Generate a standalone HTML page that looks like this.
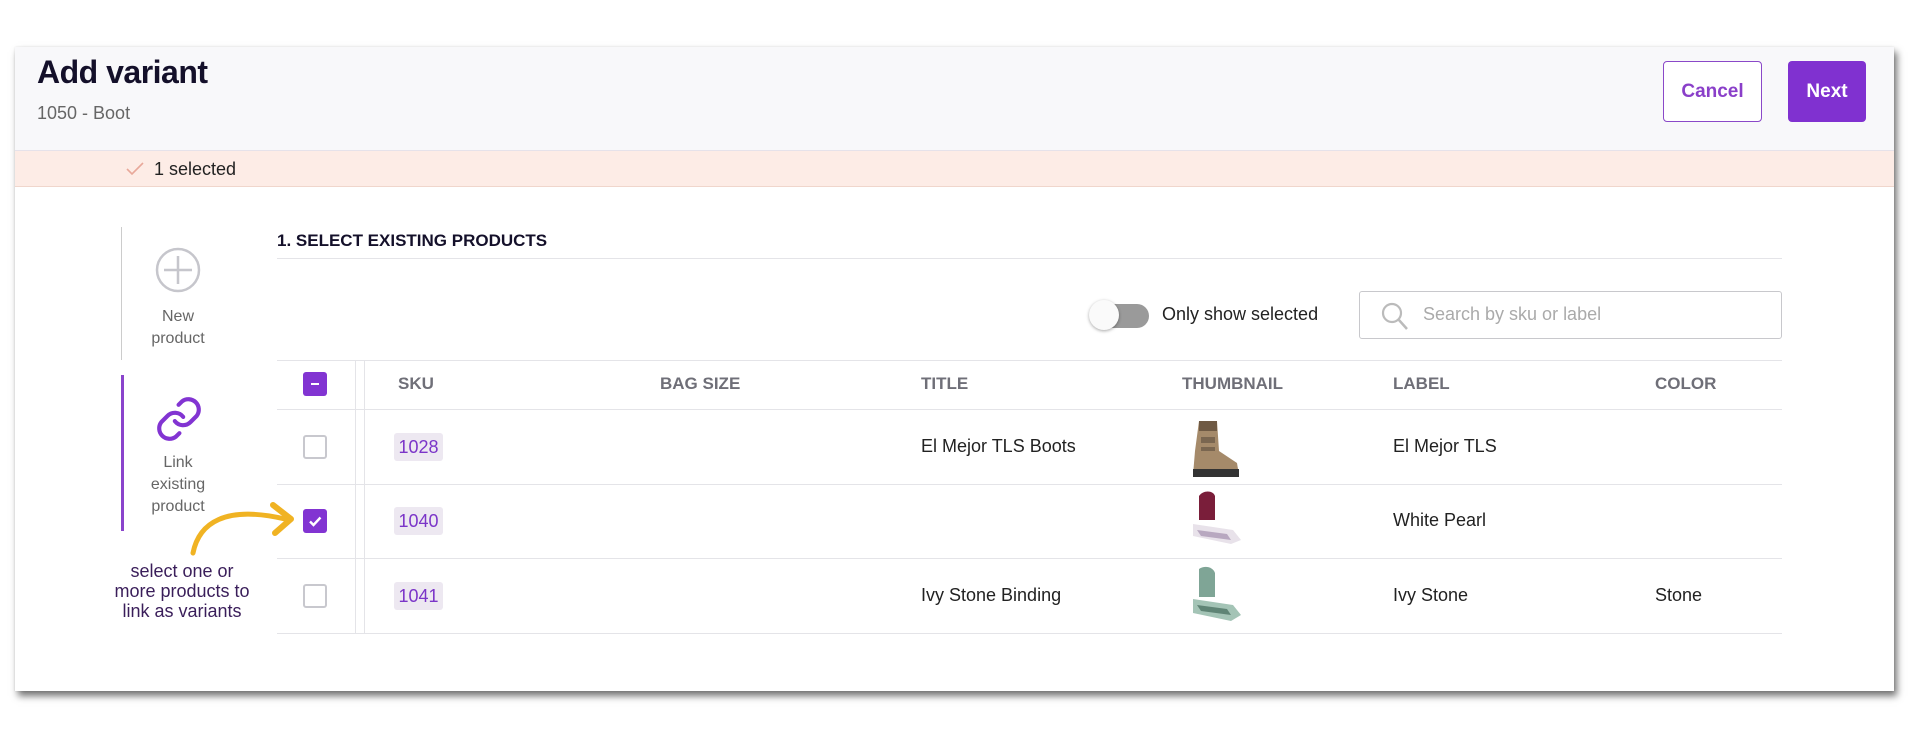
<!DOCTYPE html>
<html><head><meta charset="utf-8"><style>
*{box-sizing:border-box;margin:0;padding:0}
body{width:1920px;height:747px;background:#fff;font-family:"Liberation Sans",sans-serif;position:relative;overflow:hidden;color:#222}
.card{position:absolute;left:15px;top:47px;width:1879px;height:644px;background:#fff;box-shadow:3px 5px 7px rgba(0,0,0,.55),0 0 2px rgba(0,0,0,.1)}
.hdr{position:absolute;left:0;top:0;width:100%;height:104px;background:#f8f8fa;border-bottom:1px solid #e6e2ea}
.ban{position:absolute;left:0;top:104px;width:100%;height:36px;background:#fdece6;border-bottom:1px solid #f0d6cc}
.a{position:absolute;white-space:nowrap}
.btn{position:absolute;top:14px;height:61px;border-radius:4px;font-size:19px;font-weight:bold;display:flex;align-items:center;justify-content:center}
.hl{position:absolute;height:1px;background:#e4e4e8}
.vl{position:absolute;width:1px;background:#e4e4e8}
.th{position:absolute;top:327px;font-size:17px;font-weight:bold;color:#6f6f78}
.cb{position:absolute;left:288px;width:24px;height:24px;border:2px solid #c8c8ce;border-radius:3px;background:#fff}
.cbp{border:none;background:#8234d2}
.chip{position:absolute;left:379px;width:49px;height:28px;background:#ede8f1;border-radius:3px;color:#7b35c8;font-size:18px;text-align:center;line-height:28px}
.td{position:absolute;font-size:18px;color:#222}
</style></head><body>
<div class="card">
 <div class="hdr"></div>
 <div class="ban"></div>
 <div class="a" style="left:22px;top:7px;font-size:32px;font-weight:bold;color:#14102a;letter-spacing:-0.5px">Add variant</div>
 <div class="a" style="left:22px;top:56px;font-size:18px;color:#666">1050 - Boot</div>
 <div class="btn" style="left:1648px;width:99px;border:1.5px solid #8a48c8;color:#8a3fc9;background:#fff">Cancel</div>
 <div class="btn" style="left:1773px;width:78px;background:#8031d0;color:#fff">Next</div>
 <svg class="a" style="left:110px;top:114px" width="20" height="16"><path d="M2 8 L7 13 L18 2" stroke="#e8a89a" stroke-width="1.6" fill="none"/></svg>
 <div class="a" style="left:139px;top:112px;font-size:18px;color:#222">1 selected</div>

 <div class="vl" style="left:106px;top:180px;height:133px;background:#ccc"></div>
 <svg class="a" style="left:140px;top:200px" width="46" height="46"><circle cx="23" cy="23" r="21" stroke="#c6c6cc" stroke-width="2.5" fill="none"/><path d="M23 9V37M9 23H37" stroke="#c6c6cc" stroke-width="2.5"/></svg>
 <div class="a" style="left:118px;top:259px;width:90px;text-align:center;font-size:16px;color:#666;line-height:22px;white-space:normal">New<br>product</div>
 <div class="vl" style="left:106px;top:328px;height:156px;width:3px;background:#8a44cc"></div>
 <svg class="a" style="left:139px;top:347px" width="50" height="50" viewBox="0 0 24 24"><g stroke="#8234d2" stroke-width="2" fill="none" stroke-linecap="round"><path d="M10 13a5 5 0 0 0 7.5.5l3-3a5 5 0 0 0-7-7l-1.7 1.7"/><path d="M14 11a5 5 0 0 0-7.5-.5l-3 3a5 5 0 0 0 7 7l1.7-1.7"/></g></svg>
 <div class="a" style="left:118px;top:405px;width:90px;text-align:center;font-size:16px;color:#666;line-height:22px;white-space:normal">Link<br>existing<br>product</div>
 <svg class="a" style="left:170px;top:400px" width="120" height="112"><path d="M8 106 C14 76 40 58 100 72" stroke="#f0b323" stroke-width="5" fill="none" stroke-linecap="round"/><path d="M88 58 L106 72 L90 86" stroke="#f0b323" stroke-width="6" fill="none" stroke-linecap="round" stroke-linejoin="round"/></svg>
 <div class="a" style="left:72px;top:514px;width:190px;text-align:center;font-size:18px;color:#3a1e5a;line-height:20px;white-space:normal">select one or<br>more products to<br>link as variants</div>

 <div class="a" style="left:262px;top:184px;font-size:17px;font-weight:bold;color:#14102a">1. SELECT EXISTING PRODUCTS</div>
 <div class="hl" style="left:262px;top:211px;width:1505px"></div>
 <div class="a" style="left:1077px;top:257px;width:57px;height:24px;border-radius:12px;background:#9a9a9a"></div>
 <div class="a" style="left:1074px;top:253px;width:30px;height:30px;border-radius:15px;background:#fafafa;box-shadow:0 1px 3px rgba(0,0,0,.35)"></div>
 <div class="a" style="left:1147px;top:257px;font-size:18px;color:#222">Only show selected</div>
 <div class="a" style="left:1344px;top:244px;width:423px;height:48px;border:1.5px solid #c8c8cc;border-radius:3px"></div>
 <svg class="a" style="left:1364px;top:254px" width="32" height="32"><circle cx="13" cy="12" r="9" stroke="#bbb" stroke-width="2.2" fill="none"/><path d="M19.5 18.5L28 28" stroke="#bbb" stroke-width="2.5"/></svg>
 <div class="a" style="left:1408px;top:257px;font-size:18px;color:#aaa">Search by sku or label</div>

 <div class="hl" style="left:262px;top:313px;width:1505px"></div>
 <div class="hl" style="left:262px;top:362px;width:1505px"></div>
 <div class="hl" style="left:262px;top:437px;width:1505px"></div>
 <div class="hl" style="left:262px;top:511px;width:1505px"></div>
 <div class="hl" style="left:262px;top:586px;width:1505px"></div>
 <div class="vl" style="left:340px;top:313px;height:273px"></div>
 <div class="vl" style="left:349px;top:313px;height:273px"></div>

 <div class="cb cbp" style="top:325px"><div style="position:absolute;left:8px;top:11px;width:8px;height:2px;background:#fff"></div></div>
 <div class="th" style="left:383px">SKU</div>
 <div class="th" style="left:645px">BAG SIZE</div>
 <div class="th" style="left:906px">TITLE</div>
 <div class="th" style="left:1167px">THUMBNAIL</div>
 <div class="th" style="left:1378px">LABEL</div>
 <div class="th" style="left:1640px">COLOR</div>

 <div class="cb" style="top:388px"></div>
 <div class="chip" style="top:386px">1028</div>
 <div class="td" style="left:906px;top:389px">El Mejor TLS Boots</div>
 <svg class="a" style="left:1170px;top:370px" width="60" height="64"><path d="M14 4h18l2 30 18 12 2 12H8l2-24z" fill="#a58a6a"/><path d="M14 4h18v10H14z" fill="#6f5a44"/><path d="M8 52h46v8H8z" fill="#333"/><path d="M16 20h14v6H16zM16 30h14v4H16z" fill="#7a6650"/></svg>
 <div class="td" style="left:1378px;top:389px">El Mejor TLS</div>

 <div class="cb cbp" style="top:462px"><svg width="24" height="24"><path d="M7 12.5l3.5 3.5L17.5 8.5" stroke="#fff" stroke-width="2.4" fill="none"/></svg></div>
 <div class="chip" style="top:460px">1040</div>
 <svg class="a" style="left:1170px;top:443px" width="60" height="64"><path d="M14 6c4-6 14-6 16 0v24H14z" fill="#7a1e3a"/><path d="M8 34l40 6 8 10-10 4-38-8z" fill="#e8e2ea"/><path d="M12 40l30 4 4 6-30-4z" fill="#b8a8c0"/></svg>
 <div class="td" style="left:1378px;top:463px">White Pearl</div>

 <div class="cb" style="top:537px"></div>
 <div class="chip" style="top:535px">1041</div>
 <div class="td" style="left:906px;top:538px">Ivy Stone Binding</div>
 <svg class="a" style="left:1170px;top:518px" width="60" height="64"><path d="M14 4c6-4 14-2 16 4v24H14z" fill="#7fa596"/><path d="M8 34l40 6 8 10-10 6-38-8z" fill="#a4c4b6"/><path d="M12 40l30 4 4 6-30-4z" fill="#5f8475"/></svg>
 <div class="td" style="left:1378px;top:538px">Ivy Stone</div>
 <div class="td" style="left:1640px;top:538px">Stone</div>
</div>
</body></html>
